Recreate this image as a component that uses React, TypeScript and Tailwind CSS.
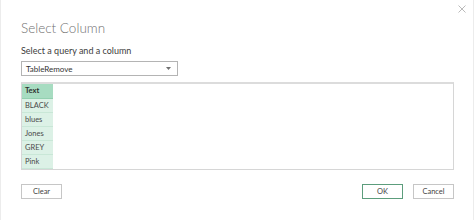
const rows = ["BLACK", "blues", "Jones", "GREY", "Pink"]

export default function App() {
  return (
    <div
      className="relative w-[474px] h-[220px] bg-white border-l border-r border-[#ececec] overflow-hidden"
      style={{ fontFamily: 'Lato, "Noto Sans", sans-serif' }}
    >
      <div className="absolute right-[7px] top-[5px]">
        <svg width="8" height="8" viewBox="0 0 8 8">
          <path d="M0.5 0.5 L7.5 7.5 M7.5 0.5 L0.5 7.5" stroke="#a8a8a8" strokeWidth="0.8" />
        </svg>
      </div>

      <div className="flex flex-col pl-[20px] pt-[18px]">
        <h1 className="text-[13.5px] leading-[20px] text-[#707070] font-light">Select Column</h1>
        <p className="mt-[6px] text-[9px] leading-[14px] text-[#3c3c3c]">Select a query and a column</p>

        <div className="mt-[3px] w-[157px] h-[15px] border border-[#b4b4b4] flex items-center justify-between pl-[4px] pr-[6px]">
          <span className="text-[8px] leading-none text-[#333]">TableRemove</span>
          <svg width="5" height="3" viewBox="0 0 5 3">
            <path d="M0 0 L5 0 L2.5 3 Z" fill="#707070" />
          </svg>
        </div>

        <div className="mt-[6px] w-[433px] h-[88px] border border-[#d6d6d6] border-t-2 border-t-[#dcdcdc]">
          <div className="w-[31px] flex flex-col">
            <div className="h-[15px] bg-[#a7dcc1] border-b border-[#93d0b0] flex items-center pl-[3px] text-[7.5px] font-bold text-[#2f2f2f]">
              Text
            </div>
            {rows.map((r) => (
              <div
                key={r}
                className="h-[14px] bg-[#dcf1e6] border-b border-[#c9e7d7] flex items-center pl-[3px] text-[7.5px] text-[#4a4a4a]"
              >
                {r}
              </div>
            ))}
          </div>
        </div>

        <div className="mt-[14px] flex items-center justify-between w-[433px]">
          <button className="w-[41px] h-[15px] border border-[#c6c6c6] bg-white text-[7.5px] leading-none text-[#444] flex items-center justify-center">
            Clear
          </button>
          <div className="flex gap-[10px]">
            <button className="w-[41px] h-[15px] border border-[#5c9d7c] bg-white text-[7.5px] leading-none text-[#444] flex items-center justify-center">
              OK
            </button>
            <button className="w-[41px] h-[15px] border border-[#c6c6c6] bg-white text-[7.5px] leading-none text-[#444] flex items-center justify-center">
              Cancel
            </button>
          </div>
        </div>
      </div>
    </div>
  )
}
